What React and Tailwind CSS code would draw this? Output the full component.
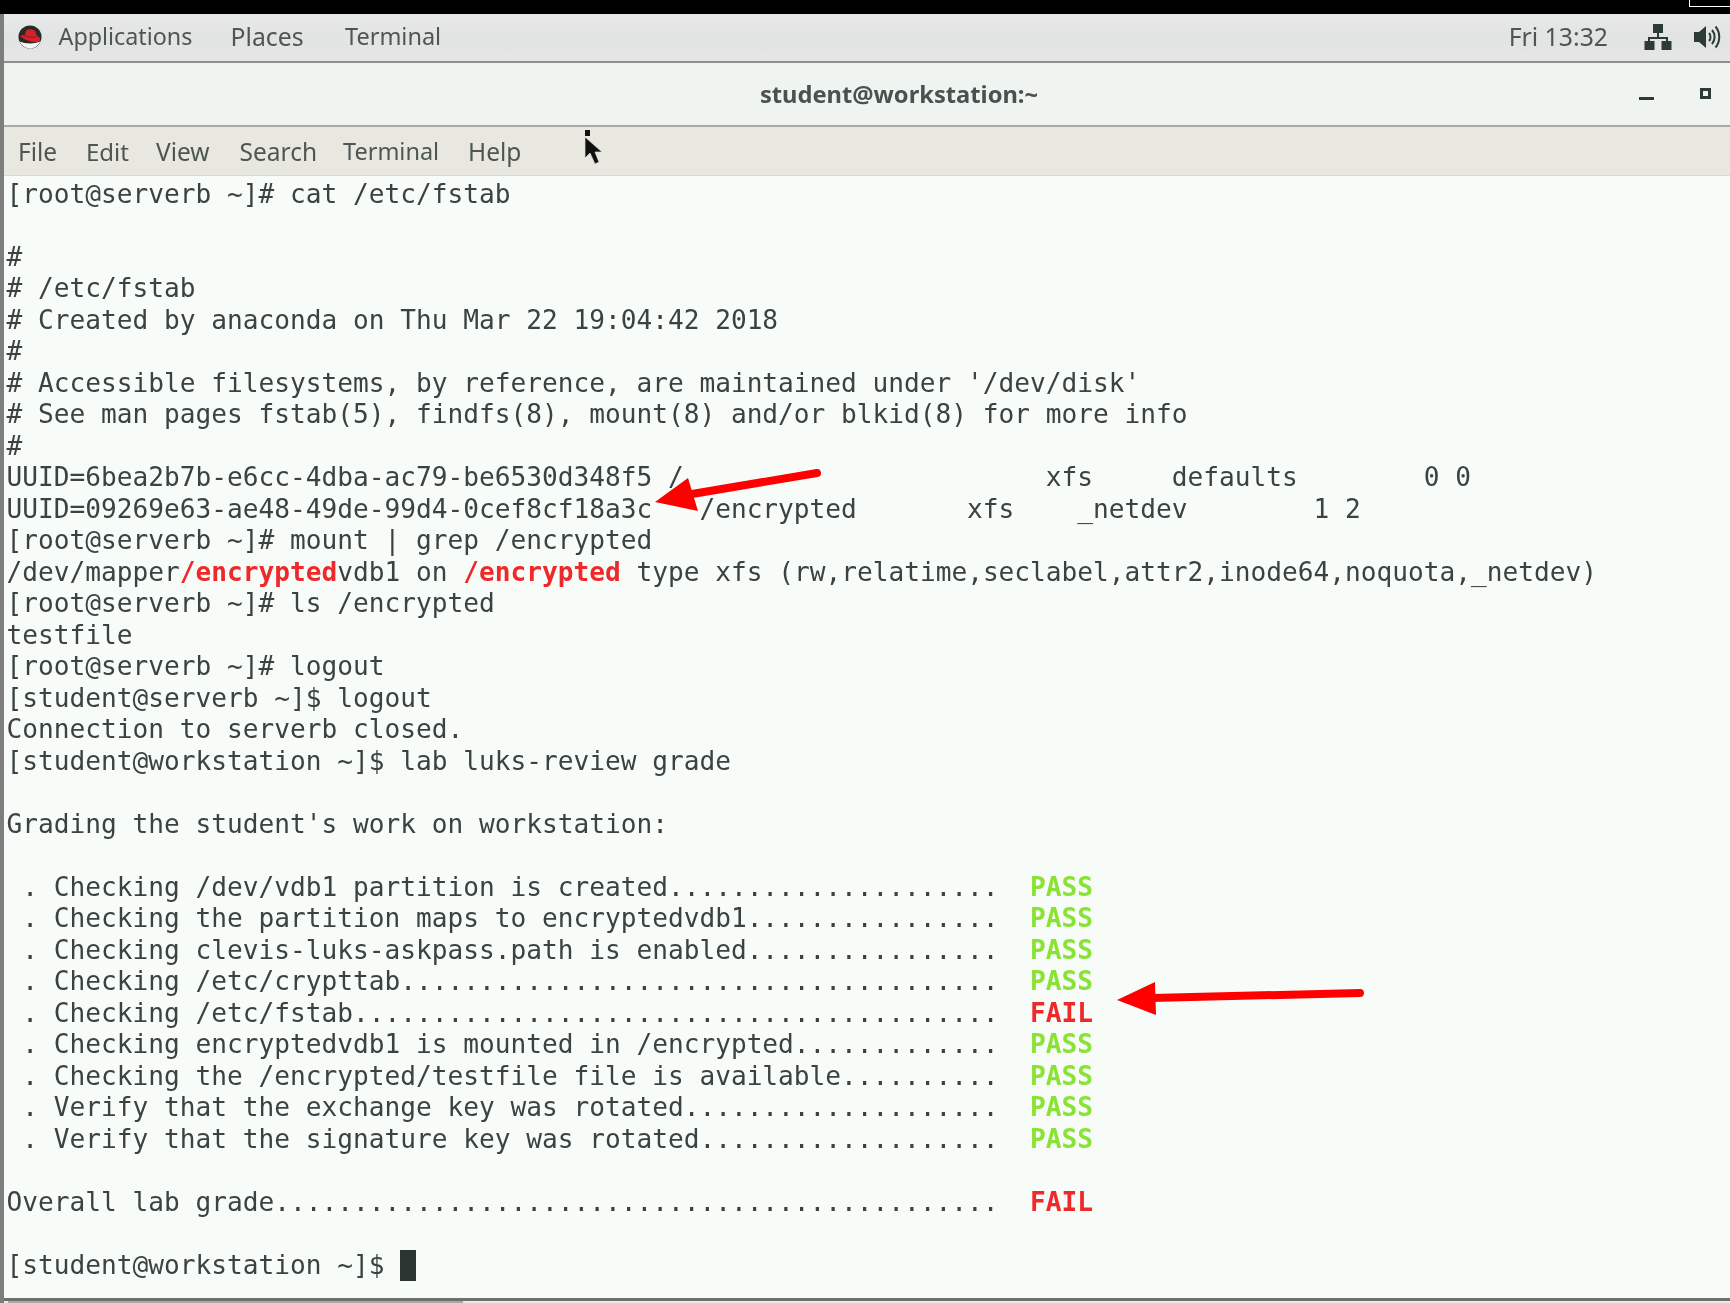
const pad = (s) => s.padEnd(63, ".") + "  ";

const PLAIN_TOP = [
  "[root@serverb ~]# cat /etc/fstab",
  "",
  "#",
  "# /etc/fstab",
  "# Created by anaconda on Thu Mar 22 19:04:42 2018",
  "#",
  "# Accessible filesystems, by reference, are maintained under '/dev/disk'",
  "# See man pages fstab(5), findfs(8), mount(8) and/or blkid(8) for more info",
  "#",
  "UUID=6bea2b7b-e6cc-4dba-ac79-be6530d348f5 /                       xfs     defaults        0 0",
  "UUID=09269e63-ae48-49de-99d4-0cef8cf18a3c   /encrypted       xfs    _netdev        1 2",
  "[root@serverb ~]# mount | grep /encrypted",
];

const PLAIN_MID = [
  "[root@serverb ~]# ls /encrypted",
  "testfile",
  "[root@serverb ~]# logout",
  "[student@serverb ~]$ logout",
  "Connection to serverb closed.",
  "[student@workstation ~]$ lab luks-review grade",
  "",
  "Grading the student's work on workstation:",
  "",
];

const CHECKS = [
  [" . Checking /dev/vdb1 partition is created", "PASS"],
  [" . Checking the partition maps to encryptedvdb1", "PASS"],
  [" . Checking clevis-luks-askpass.path is enabled", "PASS"],
  [" . Checking /etc/crypttab", "PASS"],
  [" . Checking /etc/fstab", "FAIL"],
  [" . Checking encryptedvdb1 is mounted in /encrypted", "PASS"],
  [" . Checking the /encrypted/testfile file is available", "PASS"],
  [" . Verify that the exchange key was rotated", "PASS"],
  [" . Verify that the signature key was rotated", "PASS"],
];

function Line({ children }) {
  return <div className="h-[31.5px] leading-[31.5px] whitespace-pre">{children || " "}</div>;
}

function Status({ value }) {
  return (
    <span className={value === "PASS" ? "font-bold text-[#8ae234]" : "font-bold text-[#ef2929]"}>{value}</span>
  );
}

function Hat() {
  return (
    <svg width="24" height="24" viewBox="0 0 24 24" className="shrink-0">
      <circle cx="12" cy="12" r="11.500" fill="#2c2828" />
      <path d="M1.500 16.500C4 21 8 23.500 12 23.500s8-2.500 10.500-7c-6 2.500-15 2.500-21 0z" fill="#f6f6f6" />
      <path d="M2 11c1.500-.8 3-.8 4.500-.5L8.500 5c2.500-1.200 6.500-.8 8.500.8l1.500 4.200 3.500 3c.6 3.200-1.500 4.500-5 4.200C12 17 6 14.500 2 11z" fill="#d4212b" />
      <path d="M6.800 10.300c3 1.700 7.500 2.500 11.500 1.500" fill="none" stroke="#8d1a20" strokeWidth="1" />
    </svg>
  );
}

export default function App() {
  return (
    <div className="relative w-[1730px] h-[1303px] overflow-hidden bg-black flex flex-col" style={{ fontFamily: '"Noto Sans", sans-serif' }}>
      <div className="h-[14px] shrink-0 bg-black relative">
        <div className="absolute right-0 top-0 w-[41px] h-[7px] border-l border-b border-white" />
      </div>
      <div className="flex-1 min-h-0 flex">
        <div className="w-[4px] shrink-0 bg-[#7d7f7e]" />
        <div className="flex-1 min-w-0 flex flex-col blur-[0.55px]">
          {/* Top panel */}
          <div className="h-[49px] shrink-0 bg-gradient-to-b from-[#e9e9e9] via-[#e0e4e2] to-[#e6e6e6] border-b-2 border-[#8c8f8d] flex items-center text-[#4e5654] pb-[2px]">
            <div className="ml-[14px] w-[40.500px] flex items-center"><Hat /></div>
            <span className="w-[172px] text-[23.300px]">Applications</span>
            <span className="w-[114.500px] text-[24.800px]">Places</span>
            <span className="text-[23.500px]">Terminal</span>
            <span className="ml-auto text-[24.800px]">Fri 13:32</span>
            <svg width="28" height="28" viewBox="0 0 28 28" className="ml-[36px]" fill="#2e3a37">
              <rect x="9" y="1" width="10" height="9" />
              <rect x="0.5" y="18" width="10" height="9" />
              <rect x="17.5" y="18" width="10" height="9" />
              <path d="M13 10h2v4h9v4h-2v-2H6v2H4v-4h9z" />
            </svg>
            <svg width="28" height="28" viewBox="0 0 28 28" className="ml-[21px] mr-[9px]" fill="none" stroke="#2e3a37">
              <path d="M1 9h5l7-6v22l-7-6H1z" fill="#2e3a37" stroke="none" />
              <path d="M16 10c2 2 2 6 0 8" strokeWidth="2" />
              <path d="M19 7c3.500 4 3.500 10 0 14" strokeWidth="2" />
              <path d="M22.500 3.500c5 6 5 15 0 21" strokeWidth="2" />
            </svg>
          </div>
          {/* Title bar */}
          <div className="h-[64px] shrink-0 bg-[#eff4f1] border-b-2 border-[#a8aaa7] flex items-center relative">
            <div className="w-full text-center text-[23.700px] font-bold text-[#4a5250] pl-[64px] pt-[2px]">student@workstation:~</div>
            <div className="absolute left-[1635px] top-[34px] w-[15px] h-[3px] bg-[#2e3a37]" />
            <div className="absolute left-[1696px] top-[25px] w-[11px] h-[11px] border-[3px] border-[#2e3a37]" />
          </div>
          {/* Menu bar */}
          <div className="h-[49px] shrink-0 bg-[#e8e8e1] border-b border-[#d8d8d4] flex items-center text-[#4e5654] pl-[14px] pt-[2px] text-[24.500px]">
            <span className="w-[68px]">File</span>
            <span className="w-[70px] text-[24px]">Edit</span>
            <span className="w-[83.500px]">View</span>
            <span className="w-[103.500px]">Search</span>
            <span className="w-[125px] text-[23.500px]">Terminal</span>
            <span>Help</span>
          </div>
          {/* Terminal */}
          <div
            className="flex-1 min-h-0 bg-[#f7fcf9] text-[26.16px] text-[#3a4341] pl-[2.500px] pt-[2.500px] overflow-hidden"
            style={{ fontFamily: '"DejaVu Sans Mono", monospace' }}
          >
            {PLAIN_TOP.map((l, i) => <Line key={i}>{l}</Line>)}
            <Line>
              /dev/mapper<span className="font-bold text-[#ef2929]">/encrypted</span>vdb1 on{" "}
              <span className="font-bold text-[#ef2929]">/encrypted</span> type xfs (rw,relatime,seclabel,attr2,inode64,noquota,_netdev)
            </Line>
            {PLAIN_MID.map((l, i) => <Line key={i}>{l}</Line>)}
            {CHECKS.map(([t, s], i) => (
              <Line key={i}>{pad(t)}<Status value={s} /></Line>
            ))}
            <Line />
            <Line>{pad("Overall lab grade")}<Status value="FAIL" /></Line>
            <Line />
            <Line>
              [student@workstation ~]$ <span className="inline-block w-[15.75px] h-[31px] align-top bg-[#2b3633]" />
            </Line>
          </div>
          {/* Bottom edge */}
          <div className="h-[5px] shrink-0 bg-[#e9ebe9] border-t-[3px] border-[#6d716f] flex">
            <div className="ml-[4px] w-[455px] h-full bg-[#a8aaa9]" />
          </div>
        </div>
      </div>

      {/* Annotation arrows and pointer */}
      <svg className="absolute left-0 top-0 pointer-events-none" width="1730" height="1303" viewBox="0 0 1730 1303">
        <path d="M817 473 L692 494" stroke="#ff0000" strokeWidth="8" strokeLinecap="round" />
        <path d="M655 502 L688 478 L698 511 Z" fill="#ff0000" />
        <path d="M1360 993 L1152 998" stroke="#ff0000" strokeWidth="8" strokeLinecap="round" />
        <path d="M1117 1000 L1155 982 L1156 1015 Z" fill="#ff0000" />
        <rect x="585" y="130" width="5" height="6" fill="#111" />
        <path d="M585 137 L585 158 L590 153 L595 164 L599 162 L595 152 L602 152 Z" fill="#111" stroke="#ddd" strokeWidth="0.7" />
      </svg>
    </div>
  );
}
